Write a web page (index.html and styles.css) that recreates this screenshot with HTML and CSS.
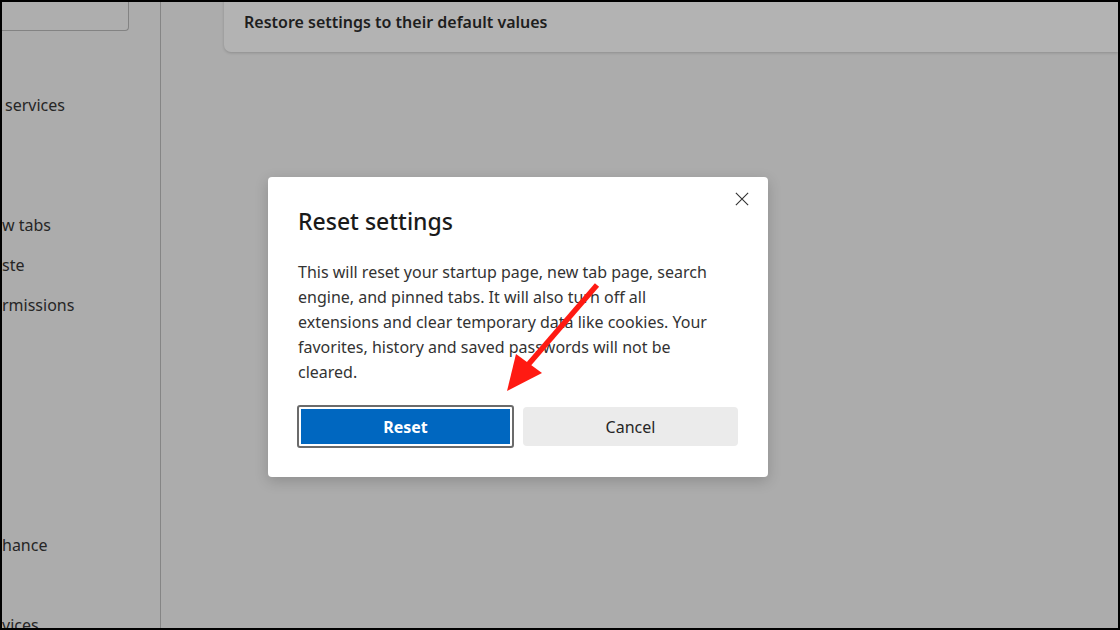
FILE: index.html
```html
<!DOCTYPE html>
<html>
<head>
<meta charset="utf-8">
<link rel="stylesheet" href="styles.css">
</head>
<body>
<div class="frame">
  <div class="app">
    <aside class="sidebar">
      <div class="search"></div>
      <ul class="nav">
        <li>services</li>
        <li></li>
        <li></li>
        <li class="cut">w tabs</li>
        <li class="cut">ste</li>
        <li class="cut">rmissions</li>
        <li></li>
        <li></li>
        <li></li>
        <li></li>
        <li></li>
        <li class="cut">hance</li>
        <li></li>
        <li class="cut">vices</li>
      </ul>
    </aside>
    <main class="main">
      <div class="card">Restore settings to their default values</div>
    </main>
  </div>

  <div class="dialog" role="dialog">
    <button class="close" aria-label="Close">
      <svg width="16" height="16" viewBox="0 0 16 16"><path d="M1 1 L15 15 M15 1 L1 15" stroke="#333" stroke-width="1.3" fill="none"/></svg>
    </button>
    <h1 class="title">Reset settings</h1>
    <p class="body">This will reset your startup page, new tab page, search<br>engine, and pinned tabs. It will also turn off all<br>extensions and clear temporary data like cookies. Your<br>favorites, history and saved passwords will not be<br>cleared.</p>
    <div class="actions">
      <button class="btn primary">Reset</button>
      <button class="btn secondary">Cancel</button>
    </div>
  </div>

  <svg class="arrow" width="1120" height="630" viewBox="0 0 1120 630">
    <line x1="597" y1="285" x2="527" y2="366" stroke="#ff1a12" stroke-width="5.5" stroke-linecap="butt"/>
    <polygon points="507,391 516,354 542,373" fill="#ff1a12"/>
  </svg>
</div>
</body>
</html>
```

FILE: styles.css
```css
* { box-sizing: border-box; }
html, body { margin: 0; padding: 0; }
body {
  width: 1120px;
  height: 630px;
  overflow: hidden;
  background: #000;
  font-family: "Noto Sans", "Open Sans", sans-serif;
}
.frame {
  position: relative;
  width: 1120px;
  height: 630px;
  padding: 2px;
}
.app {
  display: flex;
  width: 100%;
  height: 100%;
  background: #acacac;
  overflow: hidden;
}
.sidebar {
  width: 159px;
  flex: none;
  border-right: 1px solid #858585;
  display: flex;
  flex-direction: column;
}
.search {
  width: 127px;
  height: 29px;
  background: #aeaeae;
  border-right: 1px solid #838383;
  border-bottom: 1px solid #838383;
  border-bottom-right-radius: 4px;
  flex: none;
}
.nav {
  list-style: none;
  margin: 0;
  padding: 54px 0 0 0;
  color: #262626;
  font-size: 16px;
}
.nav li {
  height: 40px;
  line-height: 40px;
  padding-left: 3px;
  white-space: nowrap;
}
.nav li.cut { padding-left: 0; }
.main {
  flex: 1;
  padding-left: 63px;
}
.card {
  margin-top: -10px;
  height: 60px;
  background: #b3b3b3;
  border-bottom-left-radius: 7px;
  box-shadow: 0 1px 3px rgba(0,0,0,0.18);
  padding: 10px 0 0 20px;
  line-height: 40px;
  font-size: 16px;
  font-weight: 600;
  color: #1e1e1e;
}
.dialog {
  position: absolute;
  left: 268px;
  top: 177px;
  width: 500px;
  height: 300px;
  background: #fff;
  border-radius: 4px;
  box-shadow: 0 4px 14px rgba(0,0,0,0.18);
  padding: 27px 30px 0 30px;
}
.close {
  position: absolute;
  right: 18px;
  top: 14px;
  width: 16px;
  height: 16px;
  padding: 0;
  border: 0;
  background: none;
  display: flex;
}
.close svg { width: 14px; height: 14px; margin: 1px; }
.title {
  margin: 0;
  font-size: 23px;
  font-weight: 500;
  line-height: 34px;
  color: #1a1a1a;
}
.body {
  margin: 22px 0 0 0;
  font-size: 16px;
  line-height: 25px;
  color: #333;
  white-space: nowrap;
}
.actions {
  display: flex;
  gap: 10px;
  margin-top: 21px;
}
.btn {
  height: 41px;
  font-family: inherit;
  font-size: 16px;
  padding: 0;
}
.primary {
  width: 215px;
  background: #0067c0;
  color: #fff;
  font-weight: 700;
  border: 2px solid #fff;
  outline: 2px solid #6b6b6b;
  outline-offset: -1px;
  box-shadow: inset 0 0 0 1px #fff;
  border-radius: 2px;
}
.secondary {
  width: 215px;
  background: #ebebeb;
  color: #262626;
  border: 0;
  margin-top: 1px;
  height: 39px;
  border-radius: 4px;
}
.arrow {
  position: absolute;
  left: 0;
  top: 0;
  pointer-events: none;
}
```
